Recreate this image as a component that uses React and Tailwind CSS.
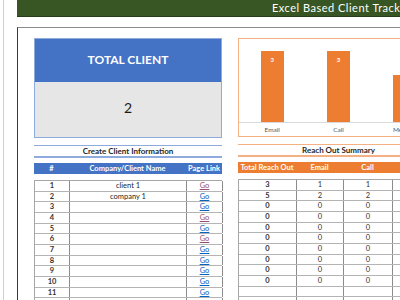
const visited = [1, 4, 6]

const clients = ['client 1', 'company 1']

const reach = [
  [3, 1, 1, 1],
  [5, 2, 2, 1],
  ...Array.from({ length: 8 }, () => [0, 0, 0, 0]),
  null,
  null,
]

const bars = [
  { label: 'Email', value: 3 },
  { label: 'Call', value: 3 },
  { label: 'Meeting', value: 2 },
]

function SectionTitle({ title, tone }) {
  const line = tone === 'blue' ? 'border-[#8faadc]' : 'border-[#f4b183]'
  return (
    <div className="mt-[7px]">
      <div className={`border-t ${line}`} />
      <div className="h-[10px] flex items-center justify-center text-[8px] font-bold text-[#262626] leading-none">
        {title}
      </div>
      <div className={`border-t-2 ${line}`} />
    </div>
  )
}

function ClientTable() {
  return (
    <div>
      <div className="mt-[5px] h-[11px] bg-[#4472c4] grid grid-cols-[35px_117px_36px] text-white text-[7.5px] font-bold leading-none whitespace-nowrap">
        <div className="flex items-center justify-center">#</div>
        <div className="flex items-center justify-center">Company/Client Name</div>
        <div className="flex items-center justify-center">Page Link</div>
      </div>
      <div className="mt-[6px] border-t border-l border-[#a6a6a6]">
        {Array.from({ length: 12 }, (_, i) => (
          <div
            key={i}
            className="h-[10.67px] grid grid-cols-[35px_117px_36px] border-b border-[#b4b4b4] text-[7.5px] leading-none"
          >
            <div className="flex items-center justify-center border-r border-[#8c8c8c] font-bold text-[#333333]">
              {i < 11 ? i + 1 : ''}
            </div>
            <div className="flex items-center justify-center border-r border-[#8c8c8c] text-[#262626]">
              {clients[i] ?? ''}
            </div>
            <div
              className={`flex items-center justify-center border-r border-[#8c8c8c] underline underline-offset-1 ${
                visited.includes(i + 1) ? 'text-[#954f72]' : 'text-[#0563c1]'
              }`}
            >
              {i < 11 ? 'Go' : ''}
            </div>
          </div>
        ))}
      </div>
    </div>
  )
}

function ReachTable() {
  return (
    <div>
      <div className="mt-[5px] h-[11px] bg-[#ed7d31] grid grid-cols-[58px_47px_49px_47px] text-white text-[7.5px] font-bold leading-none whitespace-nowrap">
        <div className="flex items-center justify-center">Total Reach Out</div>
        <div className="flex items-center justify-center">Email</div>
        <div className="flex items-center justify-center">Call</div>
        <div className="flex items-center justify-center">Meeting</div>
      </div>
      <div className="mt-[6px] border-t border-l border-[#a6a6a6]">
        {reach.map((r, i) => (
          <div
            key={i}
            className="h-[10.67px] grid grid-cols-[58px_47px_49px_47px] border-b border-[#b4b4b4] text-[7.5px] leading-none text-[#333333]"
          >
            {[0, 1, 2, 3].map((c) => (
              <div
                key={c}
                className={`flex items-center justify-center border-r border-[#8c8c8c] ${c === 0 ? 'font-bold' : ''}`}
              >
                {r ? r[c] : ''}
              </div>
            ))}
          </div>
        ))}
      </div>
    </div>
  )
}

function Chart() {
  return (
    <div className="h-[99px] border-[1.5px] border-[#f4b183] bg-white flex flex-col">
      <div className="h-[84px] flex items-end border-b border-[#d9d9d9] pt-[12px]">
        {bars.map((b) => (
          <div key={b.label} className="w-[67px] flex justify-center">
            <div
              className="w-[23px] bg-[#ed7d31] flex justify-center pt-[6px] text-white text-[6px] font-bold leading-none"
              style={{ height: `${(b.value / 3) * 71}px` }}
            >
              {b.value}
            </div>
          </div>
        ))}
      </div>
      <div className="flex pt-[4px]">
        {bars.map((b) => (
          <div key={b.label} className="w-[67px] text-center text-[6.5px] text-[#595959] leading-none">
            {b.label}
          </div>
        ))}
      </div>
    </div>
  )
}

export default function App() {
  return (
    <div
      className="w-[400px] h-[300px] overflow-hidden bg-white flex"
      style={{ fontFamily: 'Lato, "Open Sans", sans-serif' }}
    >
      <div className="w-[17px] shrink-0 h-full pl-[3px]">
        <div className="h-full border-l border-[#cfcfcf]" />
      </div>
      <div className="flex-1 min-w-0 flex flex-col">
        <div className="h-[17px] shrink-0 bg-[#375623] border-b border-[#263d17] flex items-start pt-[1px] pl-[255px] overflow-hidden">
          <span className="text-white text-[11px] tracking-[0.5px] whitespace-nowrap leading-[13px]">
            Excel Based Client Tracker
          </span>
        </div>
        <div className="mt-[10px] flex-1 border-t border-[#8c8c8c] border-l-[1.5px] border-l-[#3a3a3a] pl-[16px] pt-[10px] flex gap-[16px] overflow-hidden">
          <div className="w-[188px] shrink-0">
            <div className="border border-[#8eaadb]">
              <div className="h-[43px] bg-[#4472c4] flex items-center justify-center pb-[1px] text-white text-[12px] font-bold">
                TOTAL CLIENT
              </div>
              <div className="h-[55px] bg-[#e7e6e6] flex items-center justify-center pb-[5px] text-[14px] text-[#1a1a1a]">
                2
              </div>
            </div>
            <SectionTitle title="Create Client Information" tone="blue" />
            <ClientTable />
          </div>
          <div className="w-[201px] shrink-0">
            <Chart />
            <SectionTitle title="Reach Out Summary" tone="orange" />
            <ReachTable />
          </div>
        </div>
      </div>
    </div>
  )
}
